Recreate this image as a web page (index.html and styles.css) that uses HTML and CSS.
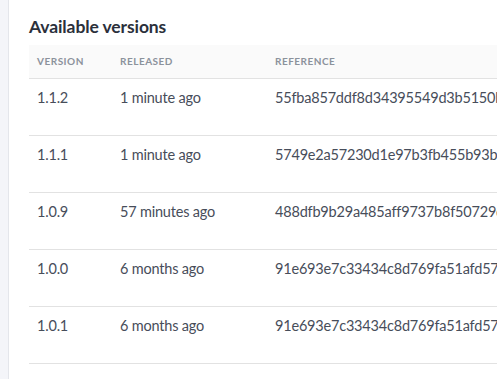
FILE: index.html
```html
<!DOCTYPE html>
<html lang="en">
<head>
    <meta charset="UTF-8">
    <title>Available versions</title>
    <link rel="stylesheet" href="styles.css">
</head>
<body>
    <div class="layout">
        <aside class="sidebar"></aside>
        <main class="content">
            <h2 class="section-title">Available versions</h2>
            <table class="versions">
                <thead>
                    <tr>
                        <th class="col-version">Version</th>
                        <th class="col-released">Released</th>
                        <th>Reference</th>
                    </tr>
                </thead>
                <tbody>
                    <tr>
                        <td>1.1.2</td>
                        <td>1 minute ago</td>
                        <td>55fba857ddf8d34395549d3b5150b3a1c2e4f7d9</td>
                    </tr>
                    <tr>
                        <td>1.1.1</td>
                        <td>1 minute ago</td>
                        <td>5749e2a57230d1e97b3fb455b93b81c0d4e6a2f8</td>
                    </tr>
                    <tr>
                        <td>1.0.9</td>
                        <td>57 minutes ago</td>
                        <td>488dfb9b29a485aff9737b8f50729d6e1c3a4b5f</td>
                    </tr>
                    <tr>
                        <td>1.0.0</td>
                        <td>6 months ago</td>
                        <td>91e693e7c33434c8d769fa51afd57e1b2c3d4e5f</td>
                    </tr>
                    <tr>
                        <td>1.0.1</td>
                        <td>6 months ago</td>
                        <td>91e693e7c33434c8d769fa51afd57e1b2c3d4e5f</td>
                    </tr>
                </tbody>
            </table>
        </main>
    </div>
</body>
</html>
```

FILE: styles.css
```css
* { margin: 0; padding: 0; box-sizing: border-box; }
body { font-family: 'Lato', 'Liberation Sans', sans-serif; color: #474d5a; background: #fff; overflow: hidden; }
.layout { display: flex; min-height: 100vh; }
.sidebar { width: 9px; flex-shrink: 0; background: #f4f5f9; border-right: 1px solid #e4e6eb; }
.content { flex: 1; padding: 15px 0 0 20px; min-width: 0; }
.section-title { font-size: 17.5px; font-weight: 700; color: #2b303b; line-height: 24px; margin-bottom: 6px; letter-spacing: -0.1px; }
.versions { border-collapse: collapse; width: 600px; table-layout: fixed; }
.versions th { background: #fafafa; font-size: 10px; font-weight: 700; letter-spacing: 0.05em; text-transform: uppercase; color: #8c929c; text-align: left; height: 33px; padding: 0 8px; border-bottom: 1px solid #e2e2e2; }
.versions .col-version { width: 83px; }
.versions .col-released { width: 155px; }
.versions td { font-size: 14.5px; line-height: 22px; letter-spacing: -0.2px; height: 57px; padding: 8px 8px 0; vertical-align: top; white-space: nowrap; overflow: hidden; border-bottom: 1px solid #e2e2e2; }
```
